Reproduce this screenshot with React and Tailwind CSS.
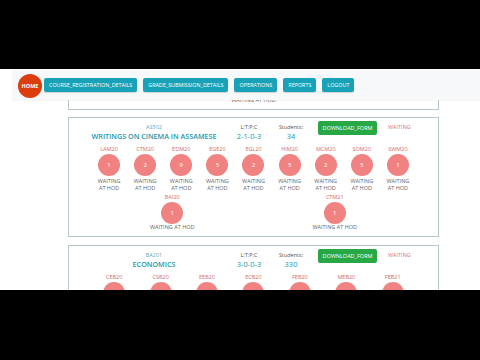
const NAV = ['COURSE_REGISTRATION_DETAILS', 'GRADE_SUBMISSION_DETAILS', 'OPERATIONS', 'REPORTS', 'LOGOUT'];

const COURSES = [
  {
    code: 'AS502', title: 'WRITINGS ON CINEMA IN ASSAMESE', ltpc: '2-1-0-3', students: 34,
    rows: [
      [['LAM20', 1], ['CTM20', 2], ['EDM20', 9], ['EGE20', 5], ['EGL20', 2], ['HIM20', 5], ['MCM20', 2], ['SOM20', 5], ['SWM20', 1]],
      [['BAI20', 1], ['CTM21', 1]],
    ],
  },
  {
    code: 'BA201', title: 'ECONOMICS', ltpc: '3-0-0-3', students: 330,
    rows: [
      [['CEB20', 65], ['CSB20', 58], ['EEB20', 22], ['ECB20', 66], ['FEB20', 97], ['MEB20', 25], ['FEB21', 1]],
    ],
  },
];

function Batch({ name, count, narrow }) {
  return (
    <div className={`flex flex-col items-center ${narrow ? 'w-[34px]' : 'w-[20px]'}`}>
      <div className="text-[5.5px] leading-[8px] text-[#d16b6b]">{name}</div>
      <div className="mt-[1px] w-[22px] h-[22px] shrink-0 rounded-full bg-[#f08282] flex items-center justify-center text-white text-[6px]">{count}</div>
      <div className={`${narrow ? 'mt-[2px]' : 'mt-[0px]'} text-[5.5px] leading-[7px] text-[#666] text-center whitespace-nowrap`}>
        {narrow ? <>WAITING<br />AT HOD</> : 'WAITING AT HOD'}
      </div>
    </div>
  );
}

function CourseCard({ c }) {
  return (
    <div className="mx-[68px] w-[371px] border border-[#b3cabd] pt-[2px] pb-[5px]">
      {/* header */}
      <div className="flex items-start h-[21px]">
        <div className="w-[170px] flex flex-col items-center pt-[4px]">
          <div className="text-[5.5px] leading-[7px] text-[#5aa7bf]">{c.code}</div>
          <div className="text-[7.2px] leading-[10px] font-semibold text-[#2096ab] whitespace-nowrap">{c.title}</div>
        </div>
        <div className="w-[20px] flex flex-col items-center pt-[4px]">
          <div className="text-[5.5px] leading-[7px] text-[#555] whitespace-nowrap">L:T:P:C</div>
          <div className="text-[7.5px] leading-[10px] text-[#2096ab] whitespace-nowrap">{c.ltpc}</div>
        </div>
        <div className="ml-[21px] w-[22px] flex flex-col items-center pt-[4px]">
          <div className="text-[5.5px] leading-[7px] text-[#555] whitespace-nowrap">Students:</div>
          <div className="text-[7.5px] leading-[10px] text-[#2096ab]">{c.students}</div>
        </div>
        <button className="ml-[16px] w-[59px] h-[14px] mt-[1px] rounded-[2px] bg-[#28a745] text-white text-[5.5px] leading-[14px]">DOWNLOAD_FORM</button>
        <div className="ml-[11px] pt-[4px] text-[5.5px] leading-[7px] text-[#d9736f]">WAITING</div>
      </div>
      {/* batches */}
      {c.rows.map((row, i) => (
        <div key={i} className={`mx-[22px] flex justify-around ${i === 0 ? 'mt-[4px]' : 'mt-[1px]'}`}>
          {row.map(([n, k]) => <Batch key={n} name={n} count={k} narrow={i === 0 && row.length > 2} />)}
        </div>
      ))}
    </div>
  );
}

export default function App() {
  return (
    <div className="w-[480px] h-[360px] flex flex-col bg-black overflow-hidden" style={{ fontFamily: '"Open Sans", "Liberation Sans", sans-serif' }}>
      <div className="h-[69px] shrink-0" />
      <div className="h-[221px] shrink-0 bg-white overflow-hidden">
        {/* navbar */}
        <div className="ml-[12px] mt-[1px] h-[30px] bg-[#f6f8f9] flex items-center pl-[6px] shadow-[0_1px_1px_rgba(0,0,0,0.04)]">
          <div className="w-[24px] h-[24px] mt-[2px] rounded-full bg-[#dc3d0c] flex items-center justify-center text-white text-[5.5px] font-bold">HOME</div>
          <div className="flex gap-[6px] ml-[2px] -mt-[1px]">
            {NAV.map(n => (
              <button key={n} className="h-[14px] px-[5px] rounded-[2px] bg-[#17a2b8] text-white text-[5.4px] leading-[14px] shadow-[0_1px_1px_rgba(0,0,0,0.15)]">{n}</button>
            ))}
          </div>
        </div>
        {/* tail of previous card */}
        <div className="mx-[68px] w-[371px] h-[10px] border-x border-b border-[#b3cabd] overflow-hidden flex justify-center">
          <div className="-mt-[3px] text-[5.5px] leading-[7px] text-[#666]">WAITING AT HOD</div>
        </div>
        <div className="mt-[7px] flex flex-col gap-[8px]">
          {COURSES.map(c => <CourseCard key={c.code} c={c} />)}
        </div>
      </div>
      <div className="flex-1" />
    </div>
  );
}
